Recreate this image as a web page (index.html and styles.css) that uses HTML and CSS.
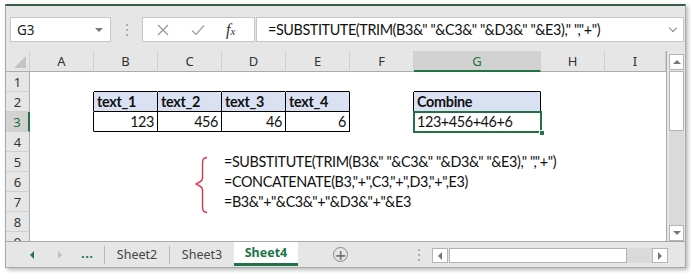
FILE: index.html
```html
<!DOCTYPE html>
<html>
<head>
<meta charset="utf-8">
<link rel="stylesheet" href="styles.css">
</head>
<body>
<div class="window">
  <div class="fbar">
    <div class="namebox"><span class="nb-text">G3</span><span class="nb-arrow"></span></div>
    <div class="grip"><i></i><i></i><i></i></div>
    <div class="fxbox">
      <svg class="ic" width="14" height="14" viewBox="0 0 14 14"><path d="M2 2L12 12M12 2L2 12" stroke="#9a9a9a" stroke-width="1.4" fill="none"/></svg>
      <svg class="ic" width="16" height="14" viewBox="0 0 16 14"><path d="M2 7.5L6 11.5L14 2.5" stroke="#a8a8a8" stroke-width="1.5" fill="none"/></svg>
      <span class="fx">f<sub>x</sub></span>
    </div>
    <div class="formula"><span>=SUBSTITUTE(TRIM(B3&amp;" "&amp;C3&amp;" "&amp;D3&amp;" "&amp;E3)," ","+")</span><span class="chev"></span></div>
  </div>
  <div class="sheetwrap">
    <div class="grid">
      <div class="ch corner"><span class="tri"></span></div>
      <div class="ch">A</div><div class="ch">B</div><div class="ch">C</div><div class="ch">D</div><div class="ch">E</div><div class="ch">F</div><div class="ch sel">G</div><div class="ch">H</div><div class="ch">I</div>

      <div class="rh">1</div>
      <div class="c"></div><div class="c bb"></div><div class="c bb"></div><div class="c bb"></div><div class="c bb"></div><div class="c"></div><div class="c bb"></div><div class="c"></div><div class="c"></div>

      <div class="rh">2</div>
      <div class="c br"></div><div class="c t hd">text_1</div><div class="c t hd">text_2</div><div class="c t hd">text_3</div><div class="c t hd">text_4</div><div class="c br"></div><div class="c t hd">Combine</div><div class="c"></div><div class="c"></div>

      <div class="rh sel">3</div>
      <div class="c br"></div><div class="c t num">123</div><div class="c t num">456</div><div class="c t num">46</div><div class="c t num">6</div><div class="c"></div><div class="c active">123+456+46+6<span class="handle"></span></div><div class="c"></div><div class="c"></div>

      <div class="rh">4</div>
      <div class="c"></div><div class="c"></div><div class="c"></div><div class="c"></div><div class="c"></div><div class="c"></div><div class="c"></div><div class="c"></div><div class="c"></div>

      <div class="rh">5</div>
      <div class="c"></div><div class="c"></div><div class="c"></div><div class="c ov">=SUBSTITUTE(TRIM(B3&amp;" "&amp;C3&amp;" "&amp;D3&amp;" "&amp;E3)," ","+")</div><div class="c"></div><div class="c"></div><div class="c"></div><div class="c"></div><div class="c"></div>

      <div class="rh">6</div>
      <div class="c"></div><div class="c"></div><div class="c"></div><div class="c ov">=CONCATENATE(B3,"+",C3,"+",D3,"+",E3)</div><div class="c"></div><div class="c"></div><div class="c"></div><div class="c"></div><div class="c"></div>

      <div class="rh">7</div>
      <div class="c"></div><div class="c"></div><div class="c"></div><div class="c ov">=B3&amp;"+"&amp;C3&amp;"+"&amp;D3&amp;"+"&amp;E3</div><div class="c"></div><div class="c"></div><div class="c"></div><div class="c"></div><div class="c"></div>

      <div class="rh">8</div>
      <div class="c"></div><div class="c"></div><div class="c"></div><div class="c"></div><div class="c"></div><div class="c"></div><div class="c"></div><div class="c"></div><div class="c"></div>

      <div class="rh">9</div>
      <div class="c"></div><div class="c"></div><div class="c"></div><div class="c"></div><div class="c"></div><div class="c"></div><div class="c"></div><div class="c"></div><div class="c"></div>

      <svg class="brace" width="16" height="58" viewBox="0 0 16 58"><path d="M13 1.5C9 2 8.5 4 8.5 8L8.5 22C8.5 25 6 26 2 28C6 30 8.5 31 8.5 34L8.5 50C8.5 54 9 56 13 56.5" stroke="#e8243c" stroke-width="1.3" fill="none"/></svg>
    </div>
    <div class="vscroll">
      <div class="sbtn"><span class="up"></span></div>
      <div class="vthumb"></div>
      <div class="vtrack"></div>
      <div class="sbtn"><span class="down"></span></div>
    </div>
  </div>
  <div class="tabbar">
    <div class="nav"><span class="lt"></span><span class="rt"></span><span class="more">...</span></div>
    <div class="sep"></div>
    <div class="tab">Sheet2</div>
    <div class="sep"></div>
    <div class="tab">Sheet3</div>
    <div class="tab active-tab">Sheet4</div>
    <div class="plus">+</div>
    <div class="grip2"><i></i><i></i><i></i></div>
    <div class="hscroll">
      <div class="hbtn"><span class="hl"></span></div>
      <div class="hthumb"></div>
      <div class="htrack"></div>
      <div class="hbtn"><span class="hr"></span></div>
    </div>
  </div>
</div>
</body>
</html>
```

FILE: styles.css
```css
* { box-sizing: border-box; }
body { margin: 0; background: #fff; width: 698px; height: 280px; overflow: hidden; }
.window {
  margin: 4px 0 0 5px;
  width: 681px;
  height: 264px;
  background: #e6e6e6;
  border: 1px solid #a8a8a8;
  border-top: 2px solid #3b5e4a;
  box-shadow: 2px 2px 4px rgba(0,0,0,0.28);
  display: flex;
  flex-direction: column;
  font-family: "Lato", "Liberation Sans", sans-serif;
}
.fbar { display: flex; align-items: stretch; height: 25px; margin: 11px 0 0 4px; }
.namebox {
  width: 101px; background: #fff; border: 1px solid #c6c6c6;
  display: flex; align-items: center; justify-content: space-between; padding: 0 7px 0 6px;
  font-family: "Noto Sans", sans-serif; font-size: 13.5px; color: #222;
}
.nb-arrow { width: 0; height: 0; border-left: 4px solid transparent; border-right: 4px solid transparent; border-top: 4px solid #777; }
.grip { width: 31px; display: flex; flex-direction: column; align-items: center; justify-content: center; gap: 3px; }
.grip i, .grip2 i { display: block; width: 2px; height: 2px; background: #b0b0b0; }
.fxbox {
  width: 113px; background: #fff; border: 1px solid #c6c6c6;
  display: flex; align-items: center; padding-left: 13px; gap: 20px;
}
.fx { font-family: "Liberation Serif", serif; font-style: italic; font-size: 16px; color: #333; }
.fx sub { font-size: 11px; vertical-align: 0; }
.formula {
  width: 428px; margin-left: 1px; background: #fff; border: 1px solid #c6c6c6;
  display: flex; align-items: center; justify-content: space-between; padding: 0 7px 0 11px;
  font-size: 14.4px; letter-spacing: -0.4px; color: #111;
}
.chev { width: 6px; height: 6px; border-right: 1.5px solid #888; border-bottom: 1.5px solid #888; transform: rotate(45deg); margin-top: -4px; }
.sheetwrap { display: flex; margin-top: 9px; height: 191px; border-bottom: 1px solid #a8a8a8; }
.grid {
  position: relative;
  height: 190px; overflow: hidden;
  display: grid;
  grid-template-columns: 24px 64px 64px 64px 64px 64px 64px 127px 64px 61px;
  grid-template-rows: 21px repeat(9, 20px);
  background: #fff;
  border-right: 1px solid #a8a8a8;
  width: 661px;
}
.ch {
  background: #e6e6e6; border-right: 1px solid #cfcfcf; border-bottom: 1px solid #ababab;
  font-family: "Noto Sans", sans-serif; font-size: 13px; color: #333;
  display: flex; align-items: center; justify-content: center;
}
.ch.corner { position: relative; }
.tri { position: absolute; right: 3px; bottom: 3px; width: 0; height: 0; border-left: 12px solid transparent; border-bottom: 12px solid #c4c4c4; }
.ch.sel { background: #d2d2d2; border-bottom: 2px solid #217346; color: #217346; }
.rh {
  background: #e6e6e6; border-right: 1px solid #ababab; border-bottom: 1px solid #cfcfcf;
  font-family: "Noto Sans", sans-serif; font-size: 13px; color: #333;
  display: flex; align-items: center; justify-content: center;
}
.rh.sel { background: #d2d2d2; border-right: 2px solid #217346; color: #217346; }
.c {
  border-right: 1px solid transparent; border-bottom: 1px solid transparent;
  font-size: 14.4px; letter-spacing: -0.4px; color: #111; line-height: 19px; padding: 0 3px; white-space: nowrap;
}
.c.bb { border-bottom-color: #000; }
.c.br { border-right-color: #000; }
.c.t { border-right-color: #000; border-bottom-color: #000; }
.c.hd { background: #d9e1f2; font-weight: bold; letter-spacing: -0.3px; }
.c.num { text-align: right; }
.c.ov { overflow: visible; position: relative; z-index: 1; padding-left: 2px; }
.c.active {
  position: relative; overflow: visible; border: none;
  outline: 2px solid #217346; outline-offset: -1px;
  padding-left: 3px; line-height: 20px;
}
.handle { position: absolute; right: -4px; bottom: -4px; width: 6px; height: 6px; background: #217346; border: 1px solid #fff; }
.brace { position: absolute; left: 188px; top: 105px; }
.vscroll { width: 18px; display: flex; flex-direction: column; padding: 3px 1px 0 2px; }
.sbtn { height: 16px; background: #fff; border: 1px solid #b4b4b4; display: flex; align-items: center; justify-content: center; }
.up { width: 0; height: 0; border-left: 4px solid transparent; border-right: 4px solid transparent; border-bottom: 4px solid #777; }
.down { width: 0; height: 0; border-left: 4px solid transparent; border-right: 4px solid transparent; border-top: 4px solid #777; }
.vthumb { height: 60px; background: #fff; border: 1px solid #b4b4b4; margin-top: 1px; }
.vtrack { flex: 1; background: #dadada; }
.tabbar { display: flex; align-items: stretch; height: 25px; }
.nav { width: 98px; display: flex; align-items: center; padding-left: 24px; }
.lt { width: 0; height: 0; border-top: 4px solid transparent; border-bottom: 4px solid transparent; border-right: 4px solid #217346; }
.rt { width: 0; height: 0; border-top: 4px solid transparent; border-bottom: 4px solid transparent; border-left: 4px solid #c0c0c0; margin-left: 24px; }
.more { color: #217346; font-weight: bold; font-family: "Noto Sans", sans-serif; font-size: 13px; margin-left: 19px; margin-top: -4px; letter-spacing: 0.5px; }
.sep { width: 1px; background: #b8b8b8; margin: 4px 0 3px; }
.tab { width: 64px; display: flex; align-items: center; justify-content: center; font-family: "Noto Sans", sans-serif; font-size: 12.5px; color: #444; }
.tab.active-tab { background: #fff; color: #217346; font-weight: bold; border-bottom: 3px solid #217346; height: 24px; }
.plus {
  width: 15px; height: 15px; border: 1.3px solid #888; border-radius: 50%; margin: 5px 0 0 35px;
  display: flex; align-items: center; justify-content: center; color: #777; font-family: "DejaVu Sans", sans-serif; font-size: 14px; line-height: 1; font-weight: bold;
}
.grip2 { width: 16px; margin-left: 63px; display: flex; flex-direction: column; align-items: center; justify-content: center; gap: 3px; }
.hscroll { display: flex; margin: 6px 0 0 5px; height: 15px; width: 236px; }
.hbtn { width: 16px; background: #fff; border: 1px solid #b4b4b4; display: flex; align-items: center; justify-content: center; }
.hl { width: 0; height: 0; border-top: 4px solid transparent; border-bottom: 4px solid transparent; border-right: 4px solid #777; }
.hr { width: 0; height: 0; border-top: 4px solid transparent; border-bottom: 4px solid transparent; border-left: 4px solid #777; }
.hthumb { width: 178px; background: #fff; border: 1px solid #b4b4b4; margin-left: 1px; }
.htrack { flex: 1; background: #dadada; }
```
